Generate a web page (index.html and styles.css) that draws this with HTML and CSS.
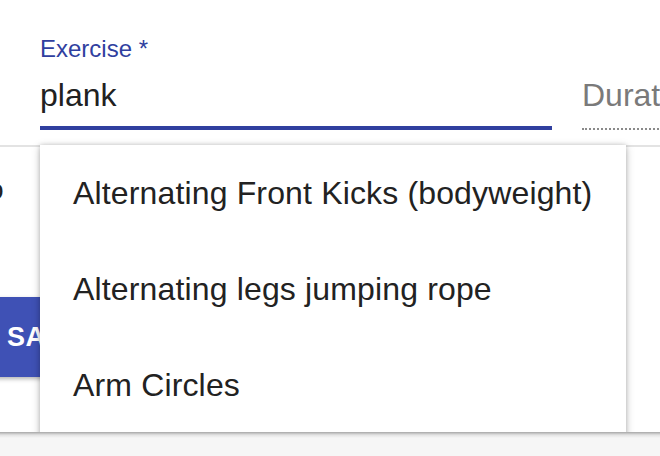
FILE: index.html
```html
<!DOCTYPE html>
<html>
<head>
<meta charset="utf-8">
<link rel="stylesheet" href="styles.css">
</head>
<body>
<div class="page">
  <div class="form-row">
    <div class="field field-exercise">
      <label class="field-label">Exercise *</label>
      <div class="field-input">plank</div>
    </div>
    <div class="field field-duration">
      <div class="field-input muted">Duration</div>
    </div>
  </div>
  <div class="card">
    <div class="card-text">o</div>
    <div class="card-actions">
      <button class="btn">SAVE</button>
    </div>
  </div>
  <div class="dropdown">
    <ul class="menu">
      <li class="menu-item">Alternating Front Kicks (bodyweight)</li>
      <li class="menu-item">Alternating legs jumping rope</li>
      <li class="menu-item">Arm Circles</li>
    </ul>
  </div>
</div>
<div class="page-edge"></div>
</body>
</html>
```
FILE: styles.css
```css
html, body {
  margin: 0;
  padding: 0;
  background: #f6f6f6;
  font-family: "Liberation Sans", Arial, sans-serif;
}
.page {
  position: relative;
  height: 432px;
  background: #fff;
  overflow: hidden;
}
.page-edge {
  height: 6px;
  background: linear-gradient(to bottom, rgba(0,0,0,0.32), rgba(0,0,0,0.08) 50%, rgba(0,0,0,0));
}
.form-row {
  display: flex;
  flex-wrap: nowrap;
  padding-left: 40px;
  height: 145px;
}
.field {
  flex-shrink: 0;
}
.field-exercise {
  width: 512px;
  padding-top: 37px;
}
.field-label {
  display: block;
  font-size: 24px;
  line-height: 24px;
  color: #303f9f;
  height: 24px;
  margin-bottom: 18px;
}
.field-input {
  font-size: 32px;
  line-height: 32px;
  color: #212121;
  padding-bottom: 15px;
  border-bottom: 4px solid #303f9f;
}
.field-duration {
  width: 200px;
  margin-left: 30px;
  padding-top: 79px;
}
.field-input.muted {
  color: #7a7a7a;
  padding-bottom: 17px;
  border-bottom: 2px dotted #8a8a8a;
  white-space: nowrap;
}
.card {
  border-top: 2px solid #e3e3e3;
  height: 285px;
}
.card-text {
  font-size: 28px;
  line-height: 32px;
  color: #212121;
  margin-left: -12px;
  margin-top: 27px;
}
.card-actions {
  margin-top: 91px;
  margin-left: -25px;
}
.btn {
  display: block;
  height: 80px;
  padding: 0 32px;
  border: none;
  border-radius: 4px;
  background: #3f51b5;
  color: #fff;
  font-family: "Liberation Sans", Arial, sans-serif;
  font-size: 27px;
  font-weight: bold;
  letter-spacing: 0.5px;
  box-shadow: 0 2px 4px rgba(0,0,0,0.3);
}
.dropdown {
  position: absolute;
  left: 40px;
  top: 145px;
  width: 586px;
  height: 340px;
  background: #fff;
  box-shadow: 0 2px 8px rgba(0,0,0,0.25), 0 0 4px rgba(0,0,0,0.15);
}
.menu {
  list-style: none;
  margin: 0;
  padding: 0;
}
.menu-item {
  height: 96px;
  line-height: 96px;
  padding-left: 33px;
  font-size: 32px;
  color: #222;
  letter-spacing: 0.15px;
  white-space: nowrap;
}
```
